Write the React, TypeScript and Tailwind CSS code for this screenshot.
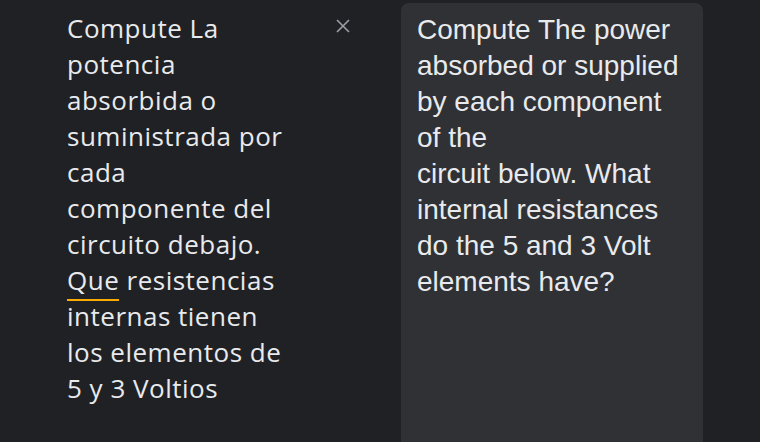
import React from "react";

const leftLines = [
  "Compute La",
  "potencia",
  "absorbida o",
  "suministrada por",
  "cada",
  "componente del",
  "circuito debajo.",
];
const leftLines2 = ["internas tienen", "los elementos de", "5 y 3 Voltios"];
const rightLines = [
  "Compute The power",
  "absorbed or supplied",
  "by each component",
  "of the",
  "circuit below. What",
  "internal resistances",
  "do the 5 and 3 Volt",
  "elements have?",
];

export default function App() {
  return (
    <div className="w-[760px] h-[442px] bg-[#202124] overflow-hidden flex">
      <div className="w-[401px] shrink-0 flex pl-[67px] pt-[10px]">
        <div
          className="flex-1 text-[26px] leading-[36px] tracking-[0.5px] text-[#e8eaed] whitespace-nowrap"
          style={{ fontFamily: '"Open Sans", "Noto Sans", sans-serif' }}
        >
          {leftLines.map((l) => (
            <div key={l}>{l}</div>
          ))}
          <div>
            <span className="border-b-2 border-[#f9ab00] pb-[1px]">Que</span> resistencias
          </div>
          {leftLines2.map((l) => (
            <div key={l}>{l}</div>
          ))}
        </div>
        <div className="w-[65px] pt-[9px] flex justify-start">
          <svg width="14" height="14" viewBox="0 0 14 14">
            <path d="M1 1 L13 13 M13 1 L1 13" stroke="#9aa0a6" strokeWidth="1.6" />
          </svg>
        </div>
      </div>
      <div className="w-[302px] mt-[3px] bg-[#303134] rounded-t-[8px] pl-[16px] pt-[9px]">
        <div
          className="text-[28px] leading-[36px] text-[#e8eaed] whitespace-nowrap"
          style={{ fontFamily: '"Liberation Sans", Arial, sans-serif' }}
        >
          {rightLines.map((l) => (
            <div key={l}>{l}</div>
          ))}
        </div>
      </div>
    </div>
  );
}
